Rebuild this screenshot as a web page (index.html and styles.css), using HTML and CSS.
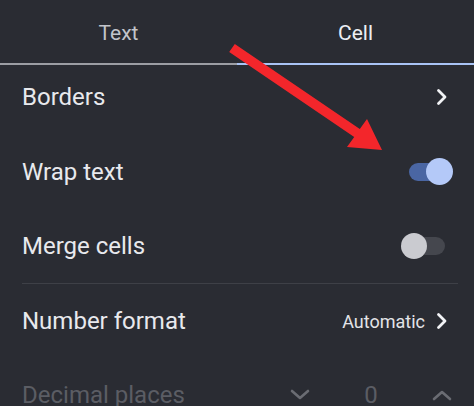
FILE: index.html
```html
<!DOCTYPE html>
<html>
<head>
<meta charset="utf-8">
<link rel="stylesheet" href="styles.css">
</head>
<body>
<div class="panel">
  <div class="tabs">
    <div class="tab">Text</div>
    <div class="tab active">Cell</div>
  </div>
  <div class="row first">
    <span class="label">Borders</span>
    <svg class="chev" width="12" height="18" viewBox="0 0 12 18"><polyline points="2.5,2.5 9,9 2.5,15.5" fill="none" stroke="#f2f3f6" stroke-width="2.8" stroke-linecap="round" stroke-linejoin="round"/></svg>
  </div>
  <div class="row toggles">
    <span class="label">Wrap text</span>
    <div class="toggle on"><div class="track"></div><div class="thumb"></div></div>
  </div>
  <div class="row toggles">
    <span class="label">Merge cells</span>
    <div class="toggle off"><div class="track"></div><div class="thumb"></div></div>
  </div>
  <div class="divider"></div>
  <div class="row">
    <span class="label">Number format</span>
    <div class="value">
      <span>Automatic</span>
      <svg class="chev" width="12" height="18" viewBox="0 0 12 18"><polyline points="2.5,2.5 9,9 2.5,15.5" fill="none" stroke="#f2f3f6" stroke-width="2.8" stroke-linecap="round" stroke-linejoin="round"/></svg>
    </div>
  </div>
  <div class="row dim">
    <span class="label">Decimal places</span>
    <div class="stepper">
      <svg width="20" height="12" viewBox="0 0 20 12"><polyline points="2,2 10,9 18,2" fill="none" stroke="#6a6c73" stroke-width="2.6" stroke-linecap="round" stroke-linejoin="round"/></svg>
      <span class="num">0</span>
      <svg width="20" height="12" viewBox="0 0 20 12"><polyline points="2,10 10,3 18,10" fill="none" stroke="#6a6c73" stroke-width="2.6" stroke-linecap="round" stroke-linejoin="round"/></svg>
    </div>
  </div>
</div>
<svg class="arrow" width="474" height="406" viewBox="0 0 474 406">
  <polygon points="234.8,43.9 359.8,128.9 367,119 382,150 347,147 354.2,137.1 229.2,52.1" fill="#f3262b"/>
</svg>
</body>
</html>
```
FILE: styles.css
```css
html, body {
  margin: 0;
  padding: 0;
  background: #2a2c33;
  width: 474px;
  height: 406px;
  overflow: hidden;
  font-family: Roboto, "Noto Sans", sans-serif;
}

.panel {
  display: flex;
  flex-direction: column;
}

.tabs {
  display: flex;
  height: 65px;
}

.tab {
  flex: 1;
  display: flex;
  align-items: center;
  justify-content: center;
  padding-top: 3px;
  box-sizing: border-box;
  font-size: 21px;
  font-weight: 400;
  color: #c2c4ca;
  border-bottom: 2px solid #9c9ea4;
}

.tab.active {
  color: #eceef3;
  border-bottom-color: #a9c3f5;
}

.row {
  height: 74px;
  display: flex;
  align-items: center;
  justify-content: space-between;
  padding: 0 26px 0 22px;
  box-sizing: border-box;
}

.row.first {
  height: 70px;
  padding-bottom: 6px;
}

.row.toggles {
  padding-right: 21px;
}

.label {
  font-size: 24px;
  color: #e8e9ed;
}

.chev {
  display: block;
}

.toggle {
  position: relative;
  width: 44px;
  height: 28px;
}

.toggle .track {
  position: absolute;
  top: 5px;
  width: 38px;
  height: 18px;
  border-radius: 9px;
}

.toggle .thumb {
  position: absolute;
  top: 0;
  width: 27px;
  height: 27px;
  border-radius: 50%;
}

.toggle.on .track {
  left: 0;
  background: #4a66a3;
}

.toggle.on .thumb {
  right: 0;
  background: #b4c9f8;
}

.toggle.off {
  margin-right: 8px;
}

.toggle.off .track {
  right: 0;
  background: #45474e;
}

.toggle.off .thumb {
  left: 0;
  width: 26px;
  height: 26px;
  top: 1px;
  background: #cacbd0;
}

.divider {
  height: 1px;
  margin: 0 16px 0 22px;
  background: #3e4047;
}

.value {
  display: flex;
  align-items: center;
  gap: 11px;
  font-size: 18px;
  color: #e3e4e8;
}

.row.dim .label {
  color: #5b5d64;
}

.stepper {
  display: flex;
  align-items: center;
  width: 162px;
  justify-content: space-between;
  margin-right: -4px;
}

.stepper .num {
  font-size: 24px;
  color: #5b5d64;
}

.arrow {
  position: absolute;
  left: 0;
  top: 0;
  pointer-events: none;
}
```
